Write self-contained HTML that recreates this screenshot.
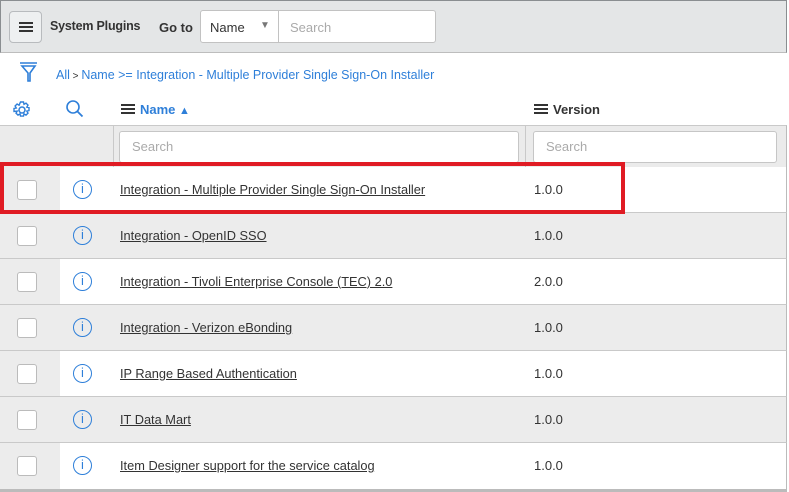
<!DOCTYPE html>
<html><head><style>
*{box-sizing:border-box;margin:0;padding:0}
body{width:789px;height:492px;overflow:hidden;background:#fff;font-family:"Liberation Sans",sans-serif;position:relative;font-size:13px;color:#333}
.abs{position:absolute}
.hdr{left:0;top:0;width:787px;height:53px;background:#e4e6e7;border:1px solid #8a8e91;border-bottom:1px solid #bdbdbd}
.btn{left:9px;top:11px;width:33px;height:32px;border:1px solid #b8bbbe;border-radius:4px;background:#eef0f1}
.bar{position:absolute;left:9px;width:14px;height:2px;background:#333}
.link{color:#2e7fd9}
.row{left:0;width:787px;height:46px;border-bottom:1px solid #c9c9c9;border-right:1px solid #bbb}
.lc{position:absolute;left:0;top:0;width:60px;height:100%;background:#ececec}
.cb{position:absolute;left:17px;top:13px;width:20px;height:20px;border:1px solid #bbb;border-radius:3px;background:#fff}
.info{position:absolute;left:73px;top:13px;width:19px;height:19px;border:1.5px solid #2e7fd9;border-radius:50%;color:#2e7fd9;font-size:13px;text-align:center;line-height:16px;font-family:"Liberation Sans",sans-serif}
.nm{position:absolute;left:120px;top:15px;text-decoration:underline;color:#333;font-size:12.8px}
.vr{position:absolute;left:534px;top:15px;font-size:13px}
.inp{background:#fff;border:1px solid #c6c6c6;border-radius:3px;color:#aaa;font-size:13px;padding-left:12px;line-height:30px;height:32px}
</style></head><body>
<div class="abs hdr"></div>
<div class="abs btn"><div class="bar" style="top:10px"></div><div class="bar" style="top:14px"></div><div class="bar" style="top:18px"></div></div>
<div class="abs" style="left:50px;top:19px;font-weight:bold;font-size:12.5px;letter-spacing:-0.2px">System Plugins</div>
<div class="abs" style="left:159px;top:20px;font-weight:bold;font-size:13px">Go to</div>
<div class="abs" style="left:200px;top:10px;width:236px;height:33px;background:#fff;border:1px solid #c2c2c2;border-radius:3px"></div>
<div class="abs" style="left:278px;top:10px;width:1px;height:33px;background:#c2c2c2"></div>
<div class="abs" style="left:210px;top:20px;font-size:13px">Name</div>
<div class="abs" style="left:260px;top:20px;font-size:10px;color:#777">▼</div>
<div class="abs" style="left:290px;top:20px;color:#aaa">Search</div>
<svg class="abs" style="left:19px;top:62px" width="20" height="22" viewBox="0 0 20 22"><path d="M1 1h17M3 4h13l-5 7v8h-2v-8z" fill="none" stroke="#2e7fd9" stroke-width="1.6"/></svg>
<div class="abs link" style="left:56px;top:68px;font-size:12.5px">All<span style="color:#333;font-size:10px"> &gt; </span>Name &gt;= Integration - Multiple Provider Single Sign-On Installer</div>
<svg class="abs" style="left:12px;top:100px" width="20" height="20" viewBox="0 0 20 20"><circle cx="10" cy="10" r="3" fill="none" stroke="#2e7fd9" stroke-width="1.5"/><path d="M8.5 2h3l.5 2.3 2-1.2 2 2-1.2 2 2.2.5v3l-2.2.5 1.2 2-2 2-2-1.2-.5 2.2h-3l-.5-2.2-2 1.2-2-2 1.2-2L2 11.5v-3l2.3-.5-1.2-2 2-2 2 1.2z" fill="none" stroke="#2e7fd9" stroke-width="1.4"/></svg>
<svg class="abs" style="left:65px;top:99px" width="20" height="20" viewBox="0 0 20 20"><circle cx="8" cy="8" r="6" fill="none" stroke="#2e7fd9" stroke-width="1.6"/><path d="M12.5 12.5l5 5" stroke="#2e7fd9" stroke-width="1.8"/></svg>
<div class="abs" style="left:121px;top:104px;width:14px;height:2px;background:#333;box-shadow:0 4px #333,0 8px #333"></div>
<div class="abs link" style="left:140px;top:102px;font-weight:bold">Name <span style="font-size:11px">▲</span></div>
<div class="abs" style="left:534px;top:104px;width:14px;height:2px;background:#333;box-shadow:0 4px #333,0 8px #333"></div>
<div class="abs" style="left:553px;top:102px;font-weight:bold">Version</div>
<div class="abs" style="left:0;top:125px;width:787px;height:42px;background:#ebebeb;border-top:1px solid #c9c9c9;border-right:1px solid #bbb"></div>
<div class="abs" style="left:113px;top:125px;width:1px;height:42px;background:#c9c9c9"></div>
<div class="abs" style="left:525px;top:125px;width:1px;height:42px;background:#c9c9c9"></div>
<div class="abs inp" style="left:119px;top:131px;width:400px">Search</div>
<div class="abs inp" style="left:533px;top:131px;width:244px">Search</div>

<div class="abs row" style="top:167px;background:#fff"><div class="lc"></div><div class="cb"></div><div class="info">i</div><div class="nm">Integration - Multiple Provider Single Sign-On Installer</div><div class="vr">1.0.0</div></div>
<div class="abs row" style="top:213px;background:#ececec"><div class="lc"></div><div class="cb"></div><div class="info">i</div><div class="nm">Integration - OpenID SSO</div><div class="vr">1.0.0</div></div>
<div class="abs row" style="top:259px;background:#fff"><div class="lc"></div><div class="cb"></div><div class="info">i</div><div class="nm">Integration - Tivoli Enterprise Console (TEC) 2.0</div><div class="vr">2.0.0</div></div>
<div class="abs row" style="top:305px;background:#ececec"><div class="lc"></div><div class="cb"></div><div class="info">i</div><div class="nm">Integration - Verizon eBonding</div><div class="vr">1.0.0</div></div>
<div class="abs row" style="top:351px;background:#fff"><div class="lc"></div><div class="cb"></div><div class="info">i</div><div class="nm">IP Range Based Authentication</div><div class="vr">1.0.0</div></div>
<div class="abs row" style="top:397px;background:#ececec"><div class="lc"></div><div class="cb"></div><div class="info">i</div><div class="nm">IT Data Mart</div><div class="vr">1.0.0</div></div>
<div class="abs row" style="top:443px;background:#fff;border-bottom:3px solid #bbb;height:49px"><div class="lc"></div><div class="cb"></div><div class="info">i</div><div class="nm">Item Designer support for the service catalog</div><div class="vr">1.0.0</div></div>

<div class="abs" style="left:0;top:162px;width:625px;height:52px;border:4px solid #e01b24"></div>
</body></html>
